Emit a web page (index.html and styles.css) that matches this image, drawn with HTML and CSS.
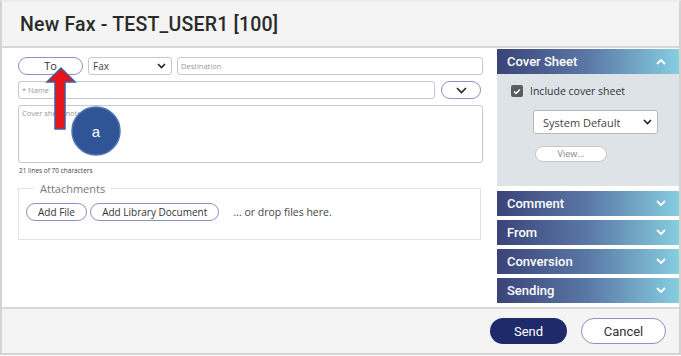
FILE: index.html
```html
<!DOCTYPE html>
<html lang="en">
  <head>
    <meta charset="UTF-8" />
    <title>New Fax</title>
    <link rel="stylesheet" href="styles.css">
  </head>
  <body>
    <div class="dialog">
      <div class="dialog-header">
        <h1>New Fax - TEST_USER1 [100]</h1>
      </div>

      <div class="dialog-body">
        <div class="main">
          <div class="row">
            <button class="pill to-btn">To</button>
            <div class="select fax-select">
              <span>Fax</span>
              <svg width="9" height="6" viewBox="0 0 9 6"><path d="M1 1 L4.5 4.5 L8 1" fill="none" stroke="#222" stroke-width="1.6"/></svg>
            </div>
            <div class="field dest">Destination</div>
          </div>

          <div class="row">
            <div class="field name">* Name</div>
            <button class="pill more-btn">
              <svg width="11" height="7" viewBox="0 0 11 7"><path d="M1 1 L5.5 5.5 L10 1" fill="none" stroke="#222" stroke-width="1.6"/></svg>
            </button>
          </div>

          <div class="field notes">Cover sheet notes</div>
          <div class="hint">21 lines of 70 characters</div>

          <fieldset class="attachments">
            <legend>Attachments</legend>
            <button class="pill small">Add File</button>
            <button class="pill small">Add Library Document</button>
            <span class="drop">... or drop files here.</span>
          </fieldset>
        </div>

        <div class="side">
          <div class="panel-head">
            <span>Cover Sheet</span>
            <svg width="10" height="7" viewBox="0 0 10 7"><path d="M1 6 L5 2 L9 6" fill="none" stroke="#fff" stroke-width="1.8"/></svg>
          </div>
          <div class="panel-body">
            <label class="check">
              <span class="box">
                <svg width="8" height="7" viewBox="0 0 8 7"><path d="M1 3.5 L3 5.5 L7 1.5" fill="none" stroke="#fff" stroke-width="1.5"/></svg>
              </span>
              Include cover sheet
            </label>
            <div class="select sheet-select">
              <span>System Default</span>
              <svg width="9" height="6" viewBox="0 0 9 6"><path d="M1 1 L4.5 4.5 L8 1" fill="none" stroke="#222" stroke-width="1.6"/></svg>
            </div>
            <button class="pill view-btn">View...</button>
          </div>

          <div class="panel-head collapsed">
            <span>Comment</span>
            <svg width="10" height="7" viewBox="0 0 10 7"><path d="M1 1 L5 5 L9 1" fill="none" stroke="#fff" stroke-width="1.8"/></svg>
          </div>
          <div class="panel-head collapsed">
            <span>From</span>
            <svg width="10" height="7" viewBox="0 0 10 7"><path d="M1 1 L5 5 L9 1" fill="none" stroke="#fff" stroke-width="1.8"/></svg>
          </div>
          <div class="panel-head collapsed">
            <span>Conversion</span>
            <svg width="10" height="7" viewBox="0 0 10 7"><path d="M1 1 L5 5 L9 1" fill="none" stroke="#fff" stroke-width="1.8"/></svg>
          </div>
          <div class="panel-head collapsed">
            <span>Sending</span>
            <svg width="10" height="7" viewBox="0 0 10 7"><path d="M1 1 L5 5 L9 1" fill="none" stroke="#fff" stroke-width="1.8"/></svg>
          </div>
        </div>
      </div>

      <div class="dialog-footer">
        <button class="send-btn">Send</button>
        <button class="cancel-btn">Cancel</button>
      </div>

      <!-- callout drawn over the form -->
      <svg class="callout" width="681" height="356" viewBox="0 0 681 356">
        <polygon points="61,68 75,82 65,82 65,129 55,129 55,82 47,82" fill="#e8141c" stroke="#3d5d9c" stroke-width="1.5"/>
        <circle cx="96" cy="131" r="24" fill="#2f5597" stroke="#4f72b0" stroke-width="1.5"/>
        <text x="96" y="137" text-anchor="middle" font-family="Liberation Sans, Arial, sans-serif" font-size="15" fill="#fff">a</text>
      </svg>
    </div>
  </body>
</html>
```

FILE: styles.css
```css
body {
  margin: 0;
  background: #fff;
  font-family: "Open Sans", "Liberation Sans", sans-serif;
  color: #333;
}

.dialog {
  position: relative;
  width: 681px;
  height: 355px;
  box-sizing: border-box;
  border: 2px solid #d3d3d3;
  border-top-color: #ececec;
  display: flex;
  flex-direction: column;
}

.dialog-header {
  height: 44px;
  background: #f4f4f4;
  border-bottom: 2px solid #d8d8d8;
  display: flex;
  align-items: center;
  padding-left: 18px;
}

h1 {
  margin: 0;
  font-family: Roboto, "Open Sans", sans-serif;
  font-weight: 500;
  font-size: 19.5px;
  color: #2a2a2a;
  letter-spacing: 0.2px;
}

.dialog-body {
  flex: 1;
  display: flex;
  min-height: 0;
}

.main {
  flex: 1;
  padding: 9px 14px 0 16px;
}

.row {
  display: flex;
  gap: 5px;
  margin-bottom: 6px;
}

.pill {
  background: #fff;
  border: 1.5px solid #8e90bd;
  border-radius: 10px;
  font-family: "Open Sans", sans-serif;
  color: #333;
  padding: 0;
  cursor: pointer;
}

.to-btn {
  width: 65px;
  height: 18px;
  font-size: 11px;
  line-height: 14px;
}

.select {
  display: flex;
  align-items: center;
  justify-content: space-between;
  box-sizing: border-box;
  border: 1.5px solid #c8c8c8;
  border-radius: 3px;
  background: #fff;
  color: #444;
}

.fax-select {
  width: 84px;
  height: 18px;
  padding: 0 5px 0 4px;
  font-size: 10px;
}

.field {
  box-sizing: border-box;
  border: 1.5px solid #c8c8c8;
  border-radius: 3px;
  background: #fff;
  color: #999;
  font-size: 7.5px;
  padding: 0 3px;
  display: flex;
  align-items: center;
}

.dest {
  flex: 1;
  height: 18px;
}

.name {
  width: 417px;
  height: 18px;
}

.more-btn {
  width: 40px;
  height: 18px;
  margin-left: 1px;
  display: flex;
  align-items: center;
  justify-content: center;
}

.notes {
  height: 58px;
  align-items: flex-start;
  padding-top: 2px;
}

.hint {
  font-size: 6.5px;
  color: #444;
  margin: 3px 0 0 1px;
}

.attachments {
  margin: 6px 2px 0 0;
  border: 1.5px solid #e2e2e2;
  padding: 3px 6px 18px 7px;
  min-width: 0;
}

.attachments legend {
  font-size: 11px;
  color: #777;
  padding: 0 6px;
  margin-left: 8px;
}

.small {
  height: 18px;
  font-size: 10px;
  padding: 0 11px;
  line-height: 14px;
}

.small + .small {
  margin-left: -1px;
}

.drop {
  font-size: 10.5px;
  color: #444;
  margin-left: 10px;
}

.side {
  width: 182px;
  padding-top: 1px;
}

.panel-head {
  height: 25px;
  display: flex;
  align-items: center;
  justify-content: space-between;
  padding: 0 13px 0 10px;
  background: linear-gradient(to right, #3a4478, #5a78a6 50%, #86cee0);
  color: #fff;
  font-family: Roboto, sans-serif;
  font-weight: 500;
  font-size: 13px;
}

.collapsed {
  margin-top: 4px;
}

.panel-body {
  height: 112px;
  background: #dde3e7;
  box-sizing: border-box;
  padding: 10px 0 0 14px;
  margin-bottom: 5px;
}

.check {
  display: flex;
  align-items: center;
  gap: 7px;
  font-size: 10.5px;
  color: #333;
}

.box {
  width: 12px;
  height: 12px;
  background: #5c5c5c;
  border-radius: 2px;
  display: flex;
  align-items: center;
  justify-content: center;
}

.sheet-select {
  width: 125px;
  height: 24px;
  margin: 12px 0 0 22px;
  padding: 0 5px 0 9px;
  font-size: 11px;
  border-color: #b9b9b9;
}

.view-btn {
  display: block;
  width: 72px;
  height: 16px;
  margin: 12px 0 0 24px;
  border-color: #c7c7c7;
  font-size: 9px;
  color: #888;
  line-height: 12px;
}

.dialog-footer {
  height: 44px;
  background: #f4f4f4;
  border-top: 2px solid #d8d8d8;
  display: flex;
  align-items: center;
  justify-content: flex-end;
  gap: 14px;
  padding-right: 13px;
}

.send-btn,
.cancel-btn {
  height: 26px;
  border-radius: 13px;
  font-family: Roboto, sans-serif;
  font-size: 13px;
  cursor: pointer;
}

.send-btn {
  width: 77px;
  background: #1f2a6a;
  border: none;
  color: #fff;
}

.cancel-btn {
  width: 85px;
  background: #fff;
  border: 1.5px solid #8e90bd;
  color: #333;
}

.callout {
  position: absolute;
  left: -2px;
  top: -2px;
  pointer-events: none;
}
```
